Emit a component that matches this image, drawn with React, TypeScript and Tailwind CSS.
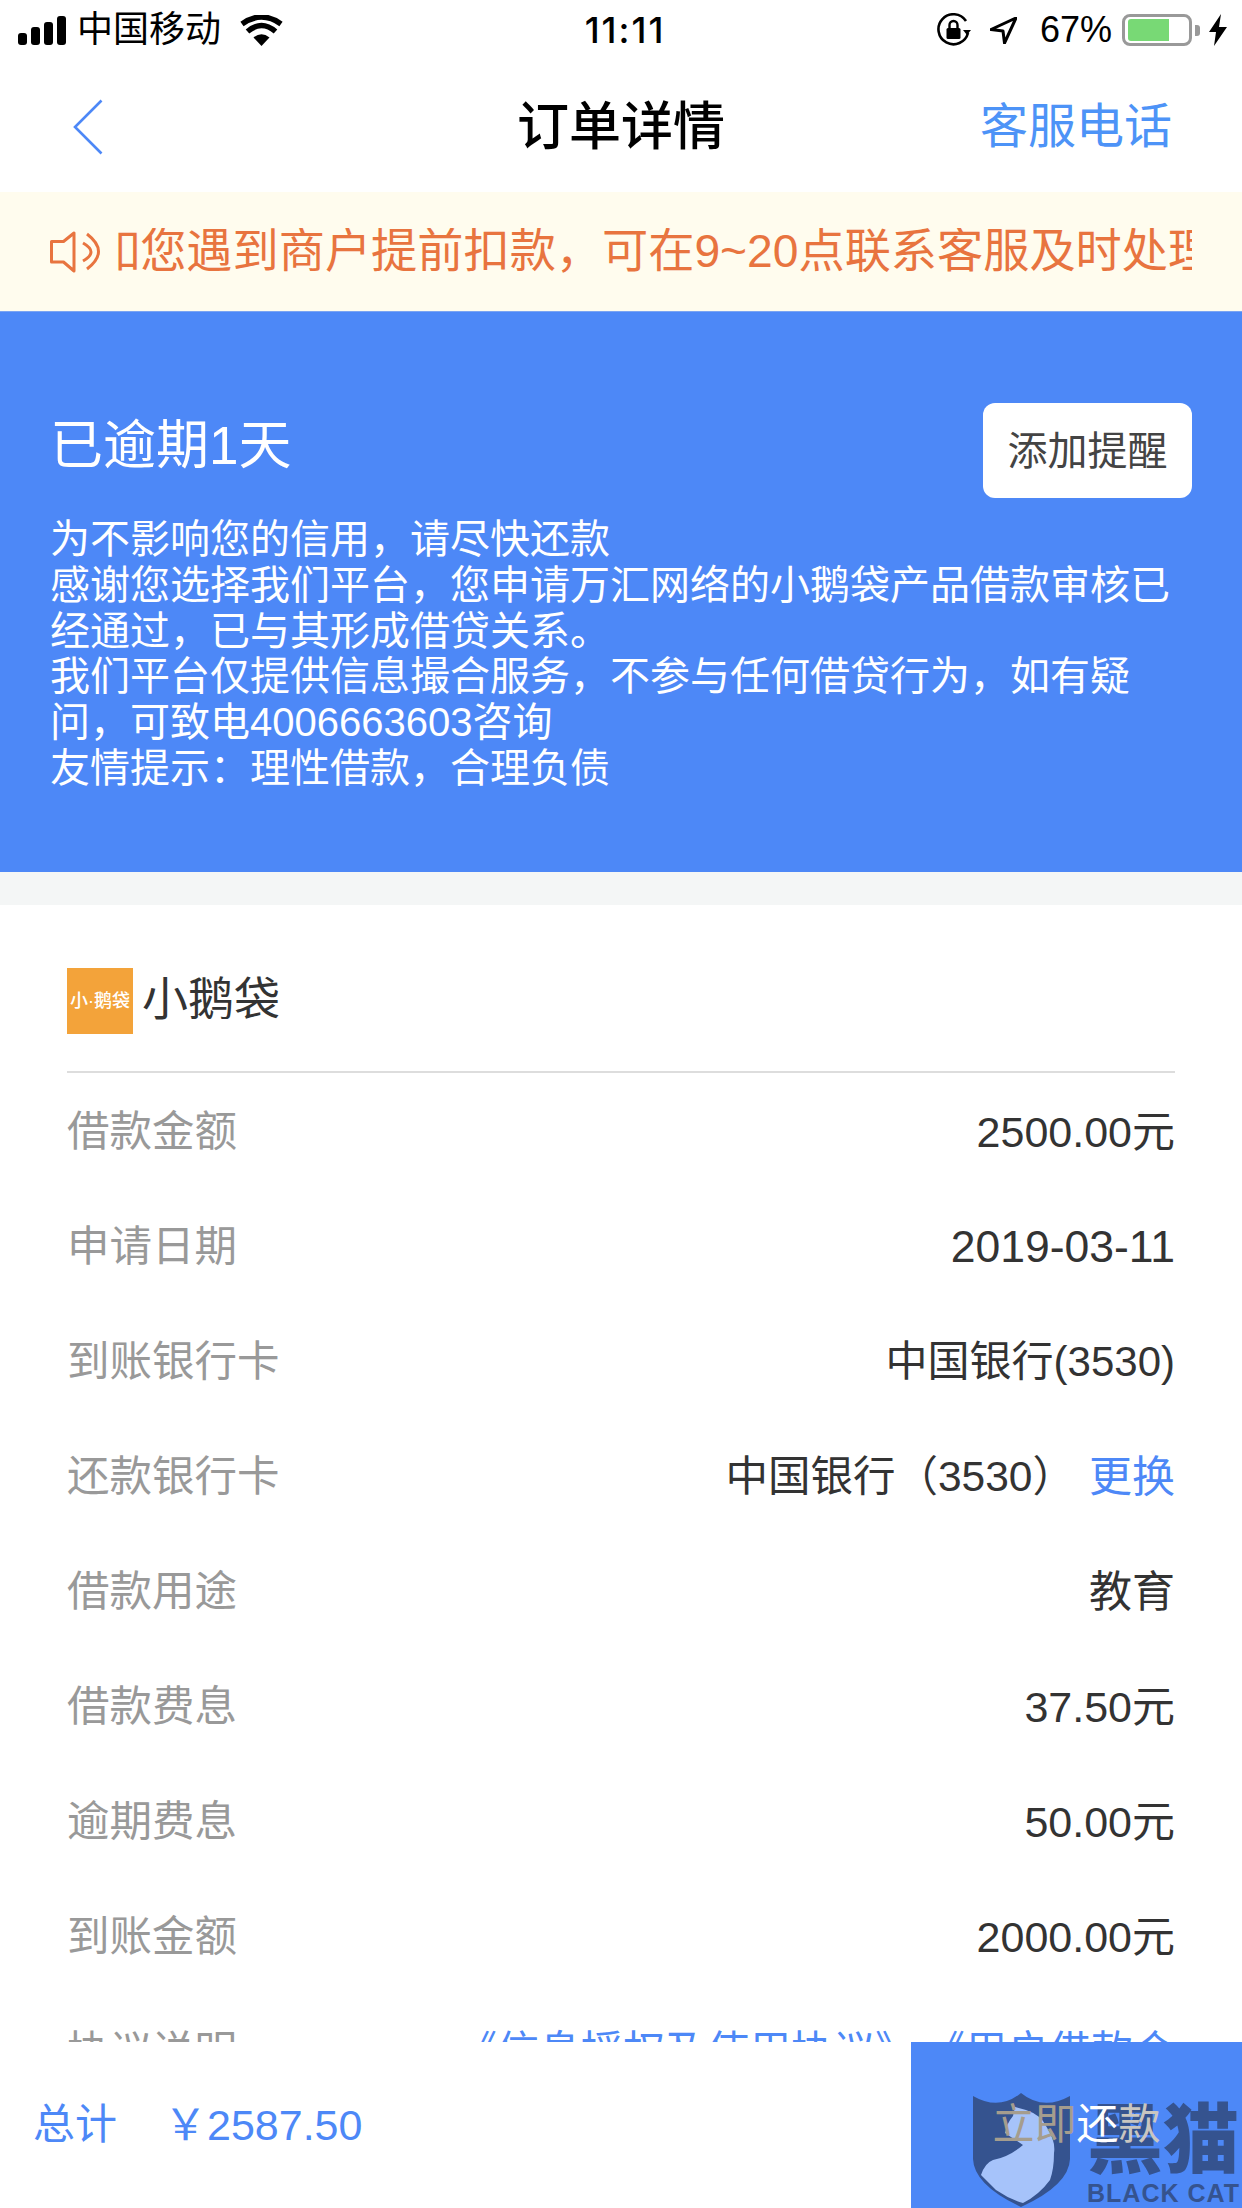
const rows = [
  { label: "借款金额", value: "2500.00元", size: "text-[43px]" },
  { label: "申请日期", value: "2019-03-11", size: "text-[44.500px]" },
  { label: "到账银行卡", value: "中国银行(3530)", size: "text-[42px]" },
  { label: "还款银行卡", value: "中国银行（3530）", size: "text-[42.500px]", action: "更换" },
  { label: "借款用途", value: "教育", size: "text-[43px]" },
  { label: "借款费息", value: "37.50元", size: "text-[43px]" },
  { label: "逾期费息", value: "50.00元", size: "text-[43px]" },
  { label: "到账金额", value: "2000.00元", size: "text-[43px]" },
];

function StatusBar() {
  return (
    <div className="flex h-[60px] shrink-0 items-center justify-between bg-white text-[36px] leading-none text-black">
      {/* LEFT */}
      <div className="flex w-[400px] items-center pl-[18px]">
        <div className="flex h-[29px] items-end gap-[4px]">
          <div className="h-[12px] w-[9px] rounded-[3px] bg-black" />
          <div className="h-[18px] w-[9px] rounded-[3px] bg-black" />
          <div className="h-[23px] w-[9px] rounded-[3px] bg-black" />
          <div className="h-[29px] w-[9px] rounded-[3px] bg-black" />
        </div>
        <span className="ml-[11px]">中国移动</span>
        <svg className="ml-[19px]" width="43" height="31" viewBox="0 0 43 31">
          <path d="M21.5 31 13.5 22.5Q21.5 16 29.5 22.5Z" fill="#000" />
          <path d="M7.5 16.5Q21.5 4.5 35.5 16.5" fill="none" stroke="#000" strokeWidth="5.5" />
          <path d="M2 9Q21.5 -5 41 9" fill="none" stroke="#000" strokeWidth="5.5" />
        </svg>
      </div>
      {/* TIME */}
      <span className="font-['Inter',sans-serif] font-medium tracking-[2px]">11:11</span>
      {/* RIGHT */}
      <div className="flex w-[392px] items-center justify-end pr-[15px]">
        <svg width="34" height="34" viewBox="0 0 34 34">
          <path d="M31 20A15 15 0 1 1 29 8" fill="none" stroke="#000" strokeWidth="2.6" />
          <path d="M26 17h8l-4 5Z" fill="#000" />
          <rect x="9.5" y="15" width="14" height="11" rx="1.5" fill="#000" />
          <path d="M12.5 15v-3a4 4 0 0 1 8 0v3" fill="none" stroke="#000" strokeWidth="2.4" />
        </svg>
        <svg className="ml-[19px]" width="27" height="27" viewBox="0 0 27 27">
          <path d="M26 1 1 12.5l12 1.5 1.5 12Z" fill="none" stroke="#000" strokeWidth="3" strokeLinejoin="round" />
        </svg>
        <span className="ml-[23px]">67%</span>
        <div className="ml-[10px] flex h-[32px] w-[70px] items-center rounded-[8px] border-[3px] border-[#999] pl-[3px]">
          <div className="h-[22px] w-[41px] rounded-l-[3px] bg-[#78d975]" />
        </div>
        <div className="ml-[3px] h-[11px] w-[5px] rounded-r-[3px] bg-[#999]" />
        <svg className="ml-[9px]" width="18" height="32" viewBox="0 0 18 32">
          <path d="M12 0 0 18h7L5 32 18 13h-8Z" fill="#000" />
        </svg>
      </div>
    </div>
  );
}

function Watermark() {
  return (
    <div className="pointer-events-none absolute bottom-0 left-[62px] flex h-[116px] items-start text-left">
      <svg width="97" height="114" viewBox="0 0 97 114" className="mt-[1px] shrink-0">
        <path d="M0 3Q26 18 48 0Q70 18 97 3V66Q96 92 48 114Q1 92 0 66Z" fill="#35538f" />
        <path d="M42 14 53 17Q68 22 73 33Q83 48 81 60Q81 76 77 87Q66 102 50 110Q36 106 23 97L8 82Q12 70 20 67Q36 64 50 52L32 40Q34 30 40 23Z" fill="#a6c3fa" />
      </svg>
      <div className="ml-[17px] flex flex-col">
        <span className="mt-[9px] whitespace-nowrap text-[76px] leading-[80px] font-black text-[#35538f]">黑猫</span>
        <span className="whitespace-nowrap text-[25px] leading-[24px] font-bold tracking-[1px] text-[#35538f]">BLACK CAT</span>
      </div>
    </div>
  );
}

export default function App() {
  return (
    <div className="flex h-[2208px] w-[1242px] flex-col overflow-hidden bg-white font-['Liberation_Sans','Noto_Sans_CJK_SC',sans-serif]">
      <StatusBar />

      {/* NAV */}
      <div className="flex h-[132px] shrink-0 items-center bg-white pt-[2px] pr-[70px] pl-[73px]">
        <svg width="30" height="56" viewBox="0 0 30 56" className="shrink-0">
          <path d="M28.5 1.5 2 28l26.5 26.5" fill="none" stroke="#4d88f7" strokeWidth="2.6" />
        </svg>
        <h1 className="ml-[414px] text-[52px] leading-none font-medium text-black">订单详情</h1>
        <span className="ml-auto text-[48px] leading-none text-[#4d93f7]">客服电话</span>
      </div>

      {/* NOTICE */}
      <div className="flex h-[119px] shrink-0 items-center bg-[#fffcee] pr-[50px] pl-[50px]">
        <svg width="50" height="44" viewBox="0 0 50 44" className="shrink-0">
          <path d="M1.5 11.5h12L24 3v38L13.5 32H1.5Z" fill="none" stroke="#e8743f" strokeWidth="3" strokeLinejoin="round" />
          <path d="M33 13Q49 22 33 31M37 4Q60 21.500 37 39" fill="none" stroke="#e8743f" strokeWidth="3" />
        </svg>
        <div className="ml-[17px] flex-1 overflow-hidden">
          <p className="ml-[-23px] text-[46.200px] leading-none whitespace-nowrap text-[#e8743f]">如您遇到商户提前扣款，可在9~20点联系客服及时处理</p>
        </div>
      </div>

      {/* OVERDUE PANEL */}
      <div className="h-[561px] shrink-0 border-t border-[#7ba4f2] bg-[#4d88f7] px-[50px] pt-[91px] text-white">
        <div className="flex items-center justify-between">
          <h2 className="mb-[10px] text-[53px] leading-none font-normal">已逾期1天</h2>
          <button className="flex h-[95px] w-[209px] items-center justify-center rounded-[12px] bg-white text-[40px] text-[#444]">添加提醒</button>
        </div>
        <p className="mt-[19px] text-[40px] leading-[45.8px]">
          为不影响您的信用，请尽快还款
          <br />
          感谢您选择我们平台，您申请万汇网络的小鹅袋产品借款审核已经通过，已与其形成借贷关系。
          <br />
          我们平台仅提供信息撮合服务，不参与任何借贷行为，如有疑问，可致电4006663603咨询
          <br />
          友情提示：理性借款，合理负债
        </p>
      </div>

      <div className="h-[33px] shrink-0 bg-[#f4f6f6]" />

      {/* ORDER CARD */}
      <div className="min-h-0 flex-1 overflow-hidden bg-white px-[67px]">
        <div className="flex h-[168px] items-center border-b-2 border-[#dddddd] pt-[25px]">
          <div className="flex h-[66px] w-[66px] items-center justify-center bg-[#f3a33a] text-[18px] leading-none font-medium whitespace-nowrap text-white">小·鹅袋</div>
          <span className="ml-[9px] pb-[4px] text-[46px] leading-none text-[#333]">小鹅袋</span>
        </div>
        {rows.map((row) => (
          <div key={row.label} className="flex h-[115px] items-center justify-between pt-[3px] leading-none">
            <span className="text-[42.500px] text-[#999]">{row.label}</span>
            <div className={`flex items-center text-[#333] ${row.size}`}>
              <span>{row.value}</span>
              {row.action && <span className="ml-[14px] text-[43px] text-[#4d88f7]">{row.action}</span>}
            </div>
          </div>
        ))}
        <div className="flex h-[115px] items-center justify-between pt-[3px] leading-none">
          <span className="text-[42.500px] text-[#999]">协议说明</span>
          <div className="flex gap-[6px] text-[42px] whitespace-nowrap text-[#4d88f7]">
            <span>《信息授权及使用协议》</span>
            <span>《用户借款合</span>
          </div>
        </div>
      </div>

      {/* BOTTOM BAR */}
      <div className="flex h-[166px] shrink-0 bg-white">
        <div className="flex flex-1 items-center pl-[33px] text-[#4d88f7]">
          <span className="text-[42px] leading-none">总计</span>
          <span className="ml-[47px] text-[43px] leading-none">￥2587.50</span>
        </div>
        <button className="relative flex w-[331px] items-center justify-center overflow-hidden bg-[#4d88f7] text-[42px] leading-none">
          <Watermark />
          <span className="relative text-[#a59d8e]">立即</span>
          <span className="relative text-white">还</span>
          <span className="relative text-[#c9c6c0]">款</span>
        </button>
      </div>
    </div>
  );
}
